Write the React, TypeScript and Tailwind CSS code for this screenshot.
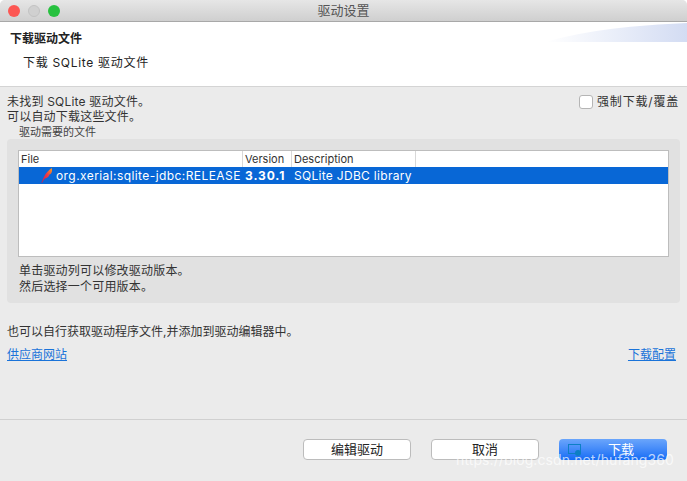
const FONT = "font-['Inter','Liberation_Sans','Noto_Sans_CJK_SC',sans-serif]"

function Feather() {
  return (
    <svg width="14" height="17" viewBox="0 0 14 18" className="shrink-0">
      <defs>
        <linearGradient id="quill" x1="0" y1="1" x2="1" y2="0">
          <stop offset="0" stopColor="#c2185b" />
          <stop offset="0.55" stopColor="#ee3a43" />
          <stop offset="1" stopColor="#f9a11b" />
        </linearGradient>
      </defs>
      <path d="M1 17 C3 12 5 6 12 1 C13 4 12 7 10 8 L8.5 8.5 L9.5 9 C8 11 6 12 4.5 12.5 C3.5 14 2.5 15.5 1.8 17 Z" fill="url(#quill)" />
    </svg>
  )
}

function DownloadIcon() {
  return (
    <svg width="14" height="13" viewBox="0 0 14 13" className="absolute left-[9px] top-[5px]">
      <rect x="0.5" y="0.5" width="12" height="9" fill="none" stroke="#0d7fc4" strokeWidth="1" />
      <circle cx="10" cy="9" r="3" fill="#0d7fc4" />
    </svg>
  )
}

export default function App() {
  return (
    <div className={`${FONT} w-[687px] h-[481px] bg-[#ebebeb] flex flex-col overflow-hidden text-[12px] text-[#333] rounded-t-[5px]`}>
      {/* title bar */}
      <div className="h-[22px] shrink-0 relative flex items-center justify-center bg-gradient-to-b from-[#e6e6e6] to-[#cfcfcf] border-b border-[#a8a8a8]">
        <div className="absolute left-[8px] top-[5px] flex gap-[8px]">
          <span className="w-[12px] h-[12px] rounded-full bg-[#fc5753]" />
          <span className="w-[12px] h-[12px] rounded-full bg-[#d0d0d0] border border-[#c2c2c2]" />
          <span className="w-[12px] h-[12px] rounded-full bg-[#27c13f]" />
        </div>
        <span className="text-[#555] text-[13px]">驱动设置</span>
      </div>

      {/* banner */}
      <div className="h-[65px] shrink-0 bg-white border-b border-[#d4d4d4] relative px-[10px] pt-[9px] text-[#222]">
        <svg width="141" height="21" viewBox="0 0 141 21" className="absolute right-0 top-0">
          <defs>
            <linearGradient id="swoosh" x1="0" y1="0" x2="1" y2="0">
              <stop offset="0" stopColor="#ffffff" />
              <stop offset="1" stopColor="#d3dcf3" />
            </linearGradient>
          </defs>
          <path d="M0 20 C40 8 90 3 141 1 V20 Z" fill="url(#swoosh)" />
        </svg>
        <p className="font-semibold leading-[16px]">下载驱动文件</p>
        <p className="pl-[13px] mt-[8px] leading-[16px] tracking-[0.7px]">下载 SQLite 驱动文件</p>
      </div>

      {/* content */}
      <div className="flex-1 flex flex-col px-[7px] pt-[7px] min-h-0">
        <div className="flex justify-between">
          <div className="leading-[15px] tracking-[0.2px]">
            <p>未找到 SQLite 驱动文件。</p>
            <p>可以自动下载这些文件。</p>
          </div>
          <label className="flex items-center gap-[4px] h-[16px] pr-[1px] tracking-[0.8px]">
            <span className="w-[14px] h-[14px] bg-white rounded-[3px] border border-[#b5b5b5]" />
            强制下载/覆盖
          </label>
        </div>

        <p className="pl-[12px] leading-[13px] mt-[2px] text-[11px] text-[#444]">驱动需要的文件</p>

        {/* group box */}
        <div className="h-[164px] bg-[#e1e1e1] rounded-[4px] px-[11px] pt-[11px] flex flex-col">
          <div className="h-[107px] bg-white border border-[#bdbdbd] flex flex-col text-[11px]">
            <div className="h-[16px] flex items-center text-[#333]">
              <span className="w-[224px] pl-[2px] border-r border-[#d8d8d8]">File</span>
              <span className="w-[49px] pl-[2px] border-r border-[#d8d8d8]">Version</span>
              <span className="w-[124px] pl-[2px] border-r border-[#d8d8d8]">Description</span>
            </div>
            <div className="h-[17px] bg-[#0867d6] text-white flex items-center text-[12px] whitespace-nowrap">
              <span className="w-[224px] flex items-center pl-[21px] gap-[2px] tracking-[0.42px]">
                <Feather />
                org.xerial:sqlite-jdbc:RELEASE
              </span>
              <span className="w-[48px] pl-[2px] font-bold tracking-[0.9px]">3.30.1</span>
              <span className="pl-[3px] tracking-[0.3px]">SQLite JDBC library</span>
            </div>
          </div>
          <div className="mt-[6px] leading-[16px] pl-[1px] text-[#333] tracking-[0.2px]">
            <p>单击驱动列可以修改驱动版本。</p>
            <p>然后选择一个可用版本。</p>
          </div>
        </div>

        <p className="mt-[21px] leading-[16px]">也可以自行获取驱动程序文件,并添加到驱动编辑器中。</p>
        <div className="mt-[7px] flex justify-between leading-[16px] text-[#1a73d9] underline">
          <a>供应商网站</a>
          <a className="pr-[4px]">下载配置</a>
        </div>
      </div>

      {/* footer */}
      <div className="h-[62px] shrink-0 relative border-t border-[#d0d0d0] flex justify-end gap-[20px] pt-[19px] pr-[20px]">
        <button className="w-[108px] h-[21px] bg-white rounded-[4px] border border-[#bcbcbc] text-[#222] text-[13px] leading-none">编辑驱动</button>
        <button className="w-[108px] h-[21px] bg-white rounded-[4px] border border-[#bcbcbc] text-[#222] text-[13px] leading-none">取消</button>
        <button className="relative w-[108px] h-[21px] pl-[16px] rounded-[4px] bg-gradient-to-b from-[#6aa5fb] to-[#0f6bf5] text-white text-[13px] leading-none">
          <DownloadIcon />
          下载
        </button>
        <span className="absolute left-[456px] top-[30px] text-[14px] leading-[20px] tracking-[0.1px] text-white/70 whitespace-nowrap pointer-events-none">https://blog.csdn.net/hufang360</span>
      </div>
    </div>
  )
}
